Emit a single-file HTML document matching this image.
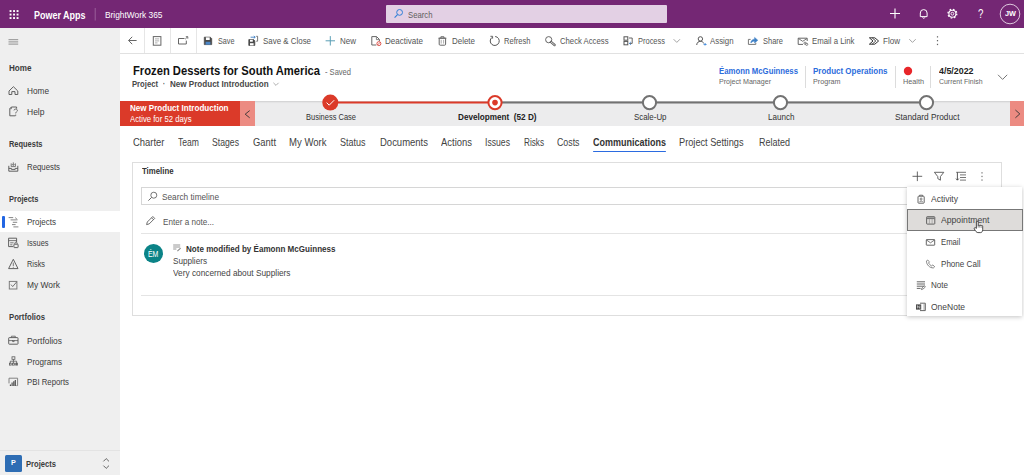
<!DOCTYPE html>
<html lang="en"><head><meta charset="utf-8"><title>Power Apps - BrightWork 365</title>
<style>
*{box-sizing:border-box;margin:0;padding:0}
html,body{width:1024px;height:475px;overflow:hidden;background:#fff;font-family:"Liberation Sans",sans-serif}
body{position:relative}
.abs,.t,svg.i{position:absolute}
.t{display:inline-block;transform-origin:0 50%;white-space:pre;line-height:20px;height:20px;font-family:"Liberation Sans",sans-serif;z-index:5}
#topbar{left:0;top:0;width:1024px;height:28.3px;background:#742774}
#search{left:386px;top:5px;width:281px;height:18.2px;background:#e3d0e4;border-radius:1px}
#side{left:0;top:28px;width:120px;height:447px;background:#efefef}
#sidesel{left:0;top:210.5px;width:120px;height:21.5px;background:#fff}
#sidebar-ind{left:2px;top:215.5px;width:2.5px;height:12px;background:#2266e3;border-radius:1px}
#sidefoot{left:0;top:450px;width:120px;height:25px;border-top:1px solid #e3e3e3;background:#efefef}
#ptile{left:5px;top:455px;width:16.5px;height:16.5px;background:#2e6db4;border-radius:1.5px}
#cmd{left:120px;top:28px;width:904px;height:25.5px;background:#fff;border-bottom:1px solid #e1e1e1}
.vd{top:28px;width:1px;height:25px;background:#e6e6e6}
.hd{top:66px;width:1px;height:22px;background:#dcdcdc}
#bpf{left:120px;top:100.8px;width:904px;height:25.2px;background:#ececed;box-shadow:inset 0 2px 2px -1px rgba(0,0,0,.13)}
#bpfname{left:120px;top:100.8px;width:120px;height:25.2px;background:#db3a29}
#bpfl{left:240px;top:100.8px;width:15px;height:25.2px;background:#ec8b82}
#bpfr{left:1009.7px;top:100.8px;width:14.3px;height:25.2px;background:#ec8b82}
#tabul{left:592.5px;top:150.7px;width:73px;height:1.7px;background:#2b6be0;border-radius:1px}
#card{left:132px;top:162px;width:870px;height:153.5px;border:1px solid #dedede;background:#fff}
#tsearch{left:140.5px;top:187px;width:853px;height:17.5px;border:1px solid #d6d6d6;background:#fff}
.hl{height:1px;background:#e4e4e4}
#avatar{left:144.1px;top:244px;width:19px;height:19px;border-radius:50%;background:#0b8387}
#menu{left:907px;top:187px;width:115px;height:129px;background:#fff;box-shadow:0 0.5px 4.5px rgba(0,0,0,.24);z-index:20}
#menusel{left:907px;top:209.4px;width:115.6px;height:21.8px;background:#dedcda;border:1px solid #777;z-index:21}
svg.i{z-index:25;overflow:visible}

</style></head>
<body>
<div id="topbar" class="abs"></div>
<div id="search" class="abs"></div>
<div id="side" class="abs"></div>
<div id="sidesel" class="abs"></div>
<div id="sidebar-ind" class="abs"></div>
<div id="sidefoot" class="abs"></div>
<div id="ptile" class="abs"></div>
<div id="cmd" class="abs"></div>
<div class="abs vd" style="left:144px"></div>
<div class="abs vd" style="left:170px"></div>
<div class="abs vd" style="left:196px"></div>
<div class="abs hd" style="left:805px"></div>
<div class="abs hd" style="left:895px"></div>
<div class="abs hd" style="left:930px"></div>
<div id="bpf" class="abs"></div>
<div id="bpfname" class="abs"></div>
<div id="bpfl" class="abs"></div>
<div id="bpfr" class="abs"></div>
<div id="tabul" class="abs"></div>
<div id="card" class="abs"></div>
<div id="tsearch" class="abs"></div>
<div class="abs hl" style="left:140.5px;top:233px;width:853px"></div>
<div class="abs hl" style="left:140.5px;top:295px;width:853px"></div>
<div id="avatar" class="abs"></div>
<div id="menu" class="abs"></div>
<div id="menusel" class="abs"></div>
<!-- BPF track -->
<svg class="i" style="left:0;top:0;z-index:6" width="1024" height="475" viewBox="0 0 1024 475">
  <line x1="330" y1="102.5" x2="495" y2="102.5" stroke="#db3a29" stroke-width="2"/>
  <line x1="495" y1="102.5" x2="926.5" y2="102.5" stroke="#727272" stroke-width="2"/>
  <circle cx="330.3" cy="102.6" r="8" fill="#db3a29"/>
  <path d="M326.6 102.6 L329.2 105.2 L334.2 100.2" fill="none" stroke="#fff" stroke-width="1"/>
  <circle cx="495" cy="102.6" r="6.6" fill="#fff" stroke="#db3a29" stroke-width="2"/>
  <circle cx="495" cy="102.6" r="2.8" fill="#db3a29"/>
  <circle cx="649.5" cy="102.6" r="6.6" fill="#fff" stroke="#727272" stroke-width="2"/>
  <circle cx="780.5" cy="102.6" r="6.6" fill="#fff" stroke="#727272" stroke-width="2"/>
  <circle cx="926.5" cy="102.6" r="6.6" fill="#fff" stroke="#727272" stroke-width="2"/>
  <path d="M249.7 110.6 L245.2 114.2 L249.7 117.8" fill="none" stroke="#333" stroke-width="0.9"/>
  <path d="M1015.4 110 L1019.8 113.9 L1015.4 117.8" fill="none" stroke="#333" stroke-width="0.9"/>
  <circle cx="908" cy="71" r="4.2" fill="#e8262a"/>
</svg>
<!-- top bar + command bar icons -->
<svg class="i" style="left:0;top:0" width="1024" height="56" viewBox="0 0 1024 56" fill="none" stroke-linecap="butt">
  <!-- waffle -->
  <g fill="#fff">
    <rect x="9.6" y="10.1" width="1.9" height="1.9"/><rect x="13.1" y="10.1" width="1.9" height="1.9"/><rect x="16.6" y="10.1" width="1.9" height="1.9"/>
    <rect x="9.6" y="13.6" width="1.9" height="1.9"/><rect x="13.1" y="13.6" width="1.9" height="1.9"/><rect x="16.6" y="13.6" width="1.9" height="1.9"/>
    <rect x="9.6" y="17.1" width="1.9" height="1.9"/><rect x="13.1" y="17.1" width="1.9" height="1.9"/><rect x="16.6" y="17.1" width="1.9" height="1.9"/>
  </g>
  <rect x="94.7" y="8" width="1" height="12.5" fill="#9a5f9a"/>
  <!-- search icon -->
  <circle cx="399.6" cy="12.4" r="2.9" stroke="#2f7fd8" stroke-width="1"/>
  <path d="M397.5 14.6 L394.6 17.6" stroke="#2f7fd8" stroke-width="1.1"/>
  <!-- plus -->
  <path d="M890 13.5 H900 M895 8.5 V18.5" stroke="#fff" stroke-width="1.1"/>
  <!-- bell -->
  <path d="M920.3 16.6 V13 A3.4 3.4 0 0 1 927.1 13 V16.6 Z" stroke="#fff" stroke-width="1"/>
  <path d="M922.6 17.4 A1.2 1.2 0 0 0 924.9 17.4" stroke="#fff" stroke-width="1"/>
  <!-- gear -->
  <g stroke="#fff">
    <circle cx="952.4" cy="13.7" r="3.5" stroke-width="1.1"/>
    <circle cx="952.4" cy="13.7" r="1.4" stroke-width="0.9"/>
    <circle cx="952.4" cy="13.7" r="4.4" stroke-width="1.3" stroke-dasharray="1.6 1.86"/>
  </g>
  <!-- avatar ring -->
  <circle cx="1010" cy="14" r="9.8" stroke="#e9d9e9" stroke-width="0.9"/>

  <!-- back arrow -->
  <path d="M128.6 40.5 H136.6 M132.2 36.8 L128.6 40.5 L132.2 44.2" stroke="#666" stroke-width="1"/>
  <!-- page icon -->
  <rect x="153.3" y="36.6" width="7.6" height="8.6" stroke="#666" stroke-width="1"/>
  <path d="M155 38.9 H159.2 M155 40.9 H159.2 M155 42.9 H157.5" stroke="#999" stroke-width="0.8"/>
  <!-- open in new window -->
  <path d="M184.5 38.5 H178.5 V44 H186.3 V40.6" stroke="#666" stroke-width="1"/>
  <path d="M185.2 39.2 L187.6 36.8 M185.8 36.7 H187.8 V38.7" stroke="#666" stroke-width="0.9"/>
  <!-- save -->
  <path d="M204.3 37.2 H210.3 L211.7 38.6 V44.6 H204.3 Z" fill="#4a4a4a" stroke="#4a4a4a" stroke-width="0.8"/>
  <rect x="205.9" y="37.4" width="3.8" height="2.6" fill="#fff"/>
  <rect x="205.6" y="41.8" width="4.8" height="2.9" fill="#4b86c6"/>
  <!-- save & close -->
  <path d="M248.8 39.6 H253.6 L254.8 40.8 V45.4 H248.8 Z" fill="#4a4a4a" stroke="#4a4a4a" stroke-width="0.8"/>
  <rect x="250" y="39.8" width="2.8" height="1.9" fill="#fff"/>
  <rect x="250" y="43.2" width="3.6" height="2.2" fill="#fff"/>
  <path d="M250.6 37.2 H255.2 M253.8 36 L255.2 37.2 L253.8 38.4" stroke="#3d7fc4" stroke-width="0.9"/>
  <path d="M256.2 36.3 H257.6 V41.2 H256.2" stroke="#555" stroke-width="0.8"/>
  <!-- new plus -->
  <path d="M325.6 40.8 H335 M330.3 36.1 V45.5" stroke="#5b9fb6" stroke-width="1"/>
  <!-- deactivate -->
  <path d="M376.3 45 H371.8 V36.6 H376.6 L379.4 39.4 V41" stroke="#666" stroke-width="1"/>
  <path d="M376.4 36.8 V39.6 H379.2" stroke="#666" stroke-width="0.8"/>
  <circle cx="378.9" cy="43.6" r="2" stroke="#d9453c" stroke-width="0.9" fill="#fff"/>
  <path d="M377.5 45 L380.3 42.2" stroke="#d9453c" stroke-width="0.8"/>
  <!-- delete -->
  <path d="M439.2 38.2 H445.6 V44.2 A1 1 0 0 1 444.6 45.2 H440.2 A1 1 0 0 1 439.2 44.2 Z" stroke="#666" stroke-width="1"/>
  <path d="M438.4 38.2 H446.4 M440.9 38 V36.7 H443.9 V38" stroke="#666" stroke-width="0.9"/>
  <path d="M441.2 39.8 V43.6 M443.6 39.8 V43.6" stroke="#999" stroke-width="0.8"/>
  <!-- refresh -->
  <path d="M492 37.4 A4.5 4.5 0 1 0 495.2 36.5" stroke="#555" stroke-width="1"/>
  <path d="M490.4 36.3 H492.6 V38.6" stroke="#555" stroke-width="0.9"/>
  <!-- check access key -->
  <circle cx="548.7" cy="39.7" r="3.1" stroke="#666" stroke-width="1"/>
  <path d="M550.9 41.9 L554.6 45" stroke="#666" stroke-width="2.4" stroke-linecap="round"/>
  <path d="M551.2 42.2 L554.4 44.8" stroke="#fff" stroke-width="0.7" stroke-linecap="round"/>
  <!-- process -->
  <rect x="624" y="36.8" width="3.8" height="3.4" stroke="#555" stroke-width="1"/>
  <rect x="624" y="41.4" width="3.8" height="3.4" stroke="#555" stroke-width="1"/>
  <path d="M629 38 H632.2 V43.4 H629.6" stroke="#555" stroke-width="0.9"/>
  <path d="M630.8 42 L629.4 43.4 L630.8 44.8" stroke="#2f7fd8" stroke-width="0.9"/>
  <!-- chevrons -->
  <path d="M673.6 39.2 L676.8 42.4 L680 39.2" stroke="#999" stroke-width="0.9"/>
  <path d="M909.3 39.2 L912.5 42.4 L915.7 39.2" stroke="#999" stroke-width="0.9"/>
  <!-- assign -->
  <circle cx="700.4" cy="38.9" r="2.2" stroke="#555" stroke-width="1"/>
  <path d="M696.7 45 C697 42.2 698.6 41.4 700.4 41.4 C702.2 41.4 703.4 42.2 703.8 43.4" stroke="#555" stroke-width="1"/>
  <path d="M703.6 44.4 H706 M705 43.3 L706.1 44.4 L705 45.5" stroke="#2f7fd8" stroke-width="0.9"/>
  <!-- share -->
  <path d="M750.6 39.4 H748.4 V44.4 H755.8 V42.8" stroke="#777" stroke-width="1"/>
  <path d="M750.8 43 C751 40.4 752.6 39.2 754.6 39.2 V37.4 L757.8 40.2 L754.6 43 V41.2 C753 41.2 751.8 41.8 750.8 43 Z" fill="#3d7fc4" stroke="#3d7fc4" stroke-width="0.5" stroke-linejoin="round"/>
  <!-- email a link -->
  <path d="M803 44.4 H798.2 V38.2 H807.2 V41" stroke="#666" stroke-width="1"/>
  <path d="M798.4 38.5 L802.7 41.3 L807 38.5" stroke="#666" stroke-width="0.9"/>
  <circle cx="805" cy="43.2" r="1.1" stroke="#666" stroke-width="0.8"/><circle cx="806.7" cy="44.3" r="1.1" stroke="#666" stroke-width="0.8"/>
  <!-- flow -->
  <path d="M869.4 37.8 H874.8 L878.6 41 L874.8 44.2 H869.4 L873 41 Z" stroke="#333" stroke-width="1" stroke-linejoin="round"/>
  <path d="M872.2 37.9 L875.8 41 L872.2 44.1" stroke="#333" stroke-width="0.9"/>
  <!-- more -->
  <g fill="#666"><rect x="936.9" y="36.2" width="1.2" height="1.3"/><rect x="936.9" y="40" width="1.2" height="1.3"/><rect x="936.9" y="43.8" width="1.2" height="1.3"/></g>
</svg>
<!-- sidebar icons -->
<svg class="i" style="left:0;top:28px" width="120" height="447" viewBox="0 28 120 447" fill="none" stroke="#5a5a5a" stroke-width="0.95">
  <!-- hamburger -->
  <path d="M8.5 39.7 H18.2 M8.5 41.9 H18.2 M8.5 44.1 H18.2" stroke="#777" stroke-width="0.8"/>
  <!-- home -->
  <path d="M9 91 L13.4 86.7 L17.8 91 V94.5 H15 V91.6 H11.8 V94.5 H9 Z" stroke-linejoin="round"/>
  <!-- help -->
  <path d="M15.4 115.8 H9.8 V108.6 L11.4 107 H16.6 V108.6" />
  <path d="M9.9 108.7 H11.5 V107.1" stroke-width="0.7"/>
  <path d="M14 110.4 C14 108.6 17.4 108.6 17.4 110.5 C17.4 111.8 15.7 111.8 15.7 113.4 M15.7 114.6 V115.8" stroke-width="0.9"/>
  <!-- requests -->
  <path d="M8.8 165.8 V171.2 H17.8 V165.8 M8.8 168.4 H11.4 V169.4 H15.2 V168.4 H17.8"/>
  <path d="M11.2 163.4 V166.6 H15.4 V163.4 M13.3 162.4 V165.4 M12.1 164.2 L13.3 165.4 L14.5 164.2" stroke-width="0.8"/>
  <!-- projects (gantt) -->
  <path d="M8.6 217.6 H13.2 M10.6 219.9 H16.8 M15.2 217.6 L17.6 219.9 M12.8 222.3 H17.2 M12 224.6 H15.6 M13.4 226.9 H18.4" stroke="#777" stroke-width="0.9"/>
  <!-- issues -->
  <path d="M13 246.6 H8.6 V238.2 H16.6 V242"/>
  <path d="M8.6 240.6 H16.6 M10.2 242.8 H13.6 M10.2 244.8 H12.4" stroke-width="0.8"/>
  <rect x="13.9" y="244.2" width="4.2" height="3.4" rx="0.5" fill="#efefef"/>
  <path d="M14.9 244.2 V243.2 A1.1 1.1 0 0 1 17.1 243.2 V244.2" stroke-width="0.8"/>
  <!-- risks -->
  <path d="M13.3 259.3 L18 268.6 H8.6 Z" stroke-linejoin="round"/>
  <path d="M13.3 262.6 V266 M13.3 266.8 V267.7" stroke-width="0.8"/>
  <!-- my work -->
  <rect x="9.3" y="281.4" width="7.6" height="7.6" stroke="#777"/>
  <path d="M11 284.6 L12.7 286.6 L16.6 282" stroke="#666" stroke-width="0.9"/>
  <!-- portfolios -->
  <rect x="8.7" y="337.6" width="9.3" height="6.6" rx="0.6"/>
  <path d="M11.4 337.6 V336.2 H15.3 V337.6 M8.7 340.6 H18 M12.6 340 V341.6 H14.1 V340" stroke-width="0.8"/>
  <!-- programs -->
  <rect x="12" y="356.8" width="2.9" height="2.5" stroke-width="0.8"/>
  <path d="M13.45 359.3 V361.2 M10.3 363.2 V361.2 H16.6 V363.2 M13.45 361.2 V363.2" stroke-width="0.8"/>
  <rect x="9.4" y="363.2" width="1.8" height="1.9" stroke-width="0.8"/><rect x="12.55" y="363.2" width="1.8" height="1.9" stroke-width="0.8"/><rect x="15.7" y="363.2" width="1.8" height="1.9" stroke-width="0.8"/>
  <!-- pbi reports -->
  <path d="M9 383.4 V378.2 H17.6 V385.6 H16.4" stroke="#777" stroke-width="0.9"/>
  <path d="M10.4 385.9 V384.4 M12.1 385.9 V382.6 M13.8 385.9 V381.2 M15.3 385.9 V380" stroke="#444" stroke-width="1.1"/>
  <!-- area switcher chevrons -->
  <path d="M103.4 461.4 L106.2 458.6 L109 461.4 M103.4 465.6 L106.2 468.4 L109 465.6" stroke="#555" stroke-width="0.9"/>
</svg>
<!-- main area icons -->
<svg class="i" style="left:120px;top:56px" width="904" height="280" viewBox="120 56 904 280" fill="none" stroke="#666" stroke-width="0.95">
  <!-- header chevrons -->
  <path d="M273.4 82.8 L276 85.4 L278.6 82.8" stroke="#999" stroke-width="0.8"/>
  <path d="M998 74.8 L1002.6 79.4 L1007.2 74.8" stroke="#666" stroke-width="0.9"/>
  <!-- timeline toolbar -->
  <path d="M912.5 176.3 H922.2 M917.35 171.5 V181.1" stroke="#555" stroke-width="0.9"/>
  <path d="M934.4 172.3 H943.8 L940.4 176.6 V180.2 L937.8 178.6 V176.6 Z" stroke="#555" stroke-width="0.9" stroke-linejoin="round"/>
  <path d="M957.4 172 V180 M956 178.6 L957.4 180.2 L958.8 178.6" stroke="#444" stroke-width="0.9"/>
  <path d="M956.2 172.3 H966 M960 174.9 H966 M960 177.5 H966 M960 180.1 H966" stroke="#666" stroke-width="0.9"/>
  <g fill="#777" stroke="none"><rect x="981.4" y="172.2" width="1.2" height="1.3"/><rect x="981.4" y="175.8" width="1.2" height="1.3"/><rect x="981.4" y="179.4" width="1.2" height="1.3"/></g>
  <!-- timeline search icon -->
  <circle cx="153.8" cy="195.2" r="3" stroke="#666" stroke-width="0.9"/>
  <path d="M151.6 197.4 L148.4 200.6" stroke="#666" stroke-width="1"/>
  <!-- pencil -->
  <path d="M146.6 224.6 L147.3 222 L152.8 216.5 L154.7 218.4 L149.2 223.9 Z M151.6 217.8 L153.4 219.6" stroke="#555" stroke-width="0.85" stroke-linejoin="round"/>
  <!-- note icon in record -->
  <path d="M173.2 245 H180.2 M173.2 247 H180.2 M173.2 249 H176.4" stroke="#8a8a8a" stroke-width="0.9"/>
  <path d="M177.4 251.2 L180.6 248.2" stroke="#8a8a8a" stroke-width="1.1"/>
</svg>
<svg class="i" style="left:900px;top:186px;z-index:31" width="124" height="136" viewBox="900 186 124 136" fill="none" stroke="#555" stroke-width="0.9">
  <!-- activity: clipboard -->
  <rect x="918" y="196.2" width="6.2" height="7" rx="0.7"/>
  <path d="M919.6 196.2 V195.2 H922.6 V196.2" stroke-width="0.8"/>
  <circle cx="921.1" cy="199" r="1" stroke-width="0.7"/><path d="M919.4 202.2 C919.6 200.6 922.6 200.6 922.8 202.2" stroke-width="0.7"/>
  <!-- appointment: calendar -->
  <rect x="926.6" y="216.7" width="8.2" height="7.4" rx="0.6"/>
  <path d="M926.6 218.3 H934.8" stroke-width="1.6" stroke="#777"/>
  <path d="M929.4 218.9 V224.1 M932.1 218.9 V224.1" stroke-width="0.7" stroke="#999"/>
  <!-- email -->
  <rect x="926.3" y="239.6" width="8.4" height="5.6" rx="0.4"/>
  <path d="M926.5 240 L930.5 242.8 L934.5 240" stroke-width="0.8"/>
  <!-- phone -->
  <path d="M927.6 260 L926.5 261.1 C926.3 264.6 929.8 268.1 933.4 267.9 L934.7 266.7 L932.8 265 L931.6 265.9 C930.4 265.4 929 264 928.6 262.9 L929.5 261.8 Z" stroke-width="0.8" stroke-linejoin="round" stroke="#666"/>
  <!-- note -->
  <path d="M916.8 281.8 H925 M916.8 284 H925 M916.8 286.2 H925 M916.8 288.4 H920.6" stroke="#555" stroke-width="0.9"/>
  <path d="M921.4 289.6 L922 287.8 L924.4 285.8 L925.4 287 L923 289 Z" stroke="#555" stroke-width="0.7" fill="#fff"/>
  <!-- onenote -->
  <path d="M920 303.2 H925.3 V310.6 H920" stroke="#555" stroke-width="0.9"/>
  <path d="M923.2 305 H925.3 M923.2 307 H925.3 M923.2 309 H925.3" stroke="#777" stroke-width="0.7"/>
  <rect x="916" y="304.4" width="5.2" height="5.2" fill="#444" stroke="none"/>
  <path d="M917.4 308.4 V305.6 L919.8 308.4 V305.6" stroke="#fff" stroke-width="0.6"/>
  <!-- hand cursor -->
  <path d="M976.4 228.4 V222.2 A0.9 0.9 0 0 1 978.2 222.2 V225.6 A0.8 0.8 0 0 1 979.7 225.7 A0.8 0.8 0 0 1 981.2 226 A0.8 0.8 0 0 1 982.7 226.6 V229.6 C982.7 231.4 981.8 232.6 980.6 232.6 H977.8 C976.6 232.6 975.6 231.2 974.4 229 C973.8 227.8 975 227 976.4 228.4 Z" fill="#fff" stroke="#222" stroke-width="0.8" stroke-linejoin="round"/>
  <path d="M978.2 225.6 V227.6 M979.7 225.8 V227.6 M981.2 226.2 V227.8" stroke="#222" stroke-width="0.5"/>
</svg>

<!-- text labels -->
<span id="t0" class="t" style="left:34.00px;top:5.00px;font-size:10.80px;font-weight:700;color:#fff;transform:scaleX(0.8306);">Power Apps</span>
<span id="t1" class="t" style="left:105.00px;top:5.00px;font-size:9.60px;font-weight:400;color:#fff;transform:scaleX(0.8718);">BrightWork 365</span>
<span id="t2" class="t" style="left:407.50px;top:4.50px;font-size:9.20px;font-weight:400;color:#605e5c;transform:scaleX(0.8412);">Search</span>
<span id="t3" class="t" style="left:1004.50px;top:4.30px;font-size:7.60px;font-weight:700;color:#fff;transform:scaleX(0.9657);">JW</span>
<span id="t4" class="t" style="left:978.30px;top:3.60px;font-size:12.50px;font-weight:400;color:#fff;transform:scaleX(0.7766);">?</span>
<span id="t5" class="t" style="left:9.00px;top:57.50px;font-size:9.10px;font-weight:700;color:#3b3b3b;transform:scaleX(0.8905);">Home</span>
<span id="t6" class="t" style="left:27.00px;top:80.50px;font-size:9.00px;font-weight:400;color:#3b3b3b;transform:scaleX(0.9161);">Home</span>
<span id="t7" class="t" style="left:27.00px;top:101.50px;font-size:9.00px;font-weight:400;color:#3b3b3b;transform:scaleX(0.9451);">Help</span>
<span id="t8" class="t" style="left:9.00px;top:134.00px;font-size:9.10px;font-weight:700;color:#3b3b3b;transform:scaleX(0.8183);">Requests</span>
<span id="t9" class="t" style="left:27.00px;top:157.00px;font-size:9.00px;font-weight:400;color:#3b3b3b;transform:scaleX(0.8677);">Requests</span>
<span id="t10" class="t" style="left:9.00px;top:189.00px;font-size:9.10px;font-weight:700;color:#3b3b3b;transform:scaleX(0.8219);">Projects</span>
<span id="t11" class="t" style="left:27.00px;top:212.00px;font-size:9.00px;font-weight:400;color:#3b3b3b;transform:scaleX(0.8919);">Projects</span>
<span id="t12" class="t" style="left:27.00px;top:233.00px;font-size:9.00px;font-weight:400;color:#3b3b3b;transform:scaleX(0.8264);">Issues</span>
<span id="t13" class="t" style="left:27.00px;top:254.00px;font-size:9.00px;font-weight:400;color:#3b3b3b;transform:scaleX(0.8182);">Risks</span>
<span id="t14" class="t" style="left:27.00px;top:275.00px;font-size:9.00px;font-weight:400;color:#3b3b3b;transform:scaleX(0.9337);">My Work</span>
<span id="t15" class="t" style="left:9.00px;top:307.10px;font-size:9.10px;font-weight:700;color:#3b3b3b;transform:scaleX(0.8483);">Portfolios</span>
<span id="t16" class="t" style="left:27.00px;top:330.50px;font-size:9.00px;font-weight:400;color:#3b3b3b;transform:scaleX(0.9326);">Portfolios</span>
<span id="t17" class="t" style="left:27.00px;top:351.50px;font-size:9.00px;font-weight:400;color:#3b3b3b;transform:scaleX(0.8971);">Programs</span>
<span id="t18" class="t" style="left:27.00px;top:372.00px;font-size:9.00px;font-weight:400;color:#3b3b3b;transform:scaleX(0.8654);">PBI Reports</span>
<span id="t19" class="t" style="left:10.80px;top:453.20px;font-size:7.20px;font-weight:700;color:#fff;transform:scaleX(1.0007);">P</span>
<span id="t20" class="t" style="left:26.00px;top:454.00px;font-size:9.10px;font-weight:700;color:#3b3b3b;transform:scaleX(0.8359);">Projects</span>
<span id="t21" class="t" style="left:217.50px;top:31.00px;font-size:9.00px;font-weight:400;color:#555;transform:scaleX(0.8043);">Save</span>
<span id="t22" class="t" style="left:262.50px;top:31.00px;font-size:9.00px;font-weight:400;color:#555;transform:scaleX(0.8802);">Save &amp; Close</span>
<span id="t23" class="t" style="left:339.50px;top:31.00px;font-size:9.00px;font-weight:400;color:#555;transform:scaleX(0.8881);">New</span>
<span id="t24" class="t" style="left:385.00px;top:31.00px;font-size:9.00px;font-weight:400;color:#555;transform:scaleX(0.8935);">Deactivate</span>
<span id="t25" class="t" style="left:452.00px;top:31.00px;font-size:9.00px;font-weight:400;color:#555;transform:scaleX(0.8841);">Delete</span>
<span id="t26" class="t" style="left:504.00px;top:31.00px;font-size:9.00px;font-weight:400;color:#555;transform:scaleX(0.8409);">Refresh</span>
<span id="t27" class="t" style="left:559.50px;top:31.00px;font-size:9.00px;font-weight:400;color:#555;transform:scaleX(0.8579);">Check Access</span>
<span id="t28" class="t" style="left:637.50px;top:31.00px;font-size:9.00px;font-weight:400;color:#555;transform:scaleX(0.8304);">Process</span>
<span id="t29" class="t" style="left:710.00px;top:31.00px;font-size:9.00px;font-weight:400;color:#555;transform:scaleX(0.8699);">Assign</span>
<span id="t30" class="t" style="left:762.50px;top:31.00px;font-size:9.00px;font-weight:400;color:#555;transform:scaleX(0.8322);">Share</span>
<span id="t31" class="t" style="left:811.50px;top:31.00px;font-size:9.00px;font-weight:400;color:#555;transform:scaleX(0.8668);">Email a Link</span>
<span id="t32" class="t" style="left:883.00px;top:31.00px;font-size:9.00px;font-weight:400;color:#555;transform:scaleX(0.8940);">Flow</span>
<span id="t33" class="t" style="left:132.50px;top:60.50px;font-size:13.40px;font-weight:700;color:#111;transform:scaleX(0.8367);">Frozen Desserts for South America</span>
<span id="t34" class="t" style="left:324.50px;top:61.50px;font-size:9.20px;font-weight:400;color:#666;transform:scaleX(0.8209);">- Saved</span>
<span id="t35" class="t" style="left:132.40px;top:74.00px;font-size:9.40px;font-weight:700;color:#484848;transform:scaleX(0.8177);">Project</span>
<span id="t36" class="t" style="left:163.20px;top:74.00px;font-size:9.40px;font-weight:700;color:#484848;transform:scaleX(0.6400);">·</span>
<span id="t37" class="t" style="left:170.40px;top:74.00px;font-size:9.40px;font-weight:700;color:#484848;transform:scaleX(0.8604);">New Product Introduction</span>
<span id="t38" class="t" style="left:718.50px;top:61.00px;font-size:9.40px;font-weight:700;color:#2c6cdc;transform:scaleX(0.8286);">Éamonn McGuinness</span>
<span id="t39" class="t" style="left:718.50px;top:72.40px;font-size:8.00px;font-weight:400;color:#666;transform:scaleX(0.8858);">Project Manager</span>
<span id="t40" class="t" style="left:813.00px;top:61.00px;font-size:9.40px;font-weight:700;color:#2c6cdc;transform:scaleX(0.8513);">Product Operations</span>
<span id="t41" class="t" style="left:813.00px;top:72.40px;font-size:8.00px;font-weight:400;color:#666;transform:scaleX(0.8961);">Program</span>
<span id="t42" class="t" style="left:902.50px;top:72.40px;font-size:8.00px;font-weight:400;color:#666;transform:scaleX(0.9081);">Health</span>
<span id="t43" class="t" style="left:938.50px;top:61.00px;font-size:9.40px;font-weight:700;color:#222;transform:scaleX(0.9452);">4/5/2022</span>
<span id="t44" class="t" style="left:938.50px;top:72.40px;font-size:8.00px;font-weight:400;color:#666;transform:scaleX(0.8657);">Current Finish</span>
<span id="t45" class="t" style="left:129.50px;top:97.50px;font-size:9.40px;font-weight:700;color:#fff;transform:scaleX(0.8596);">New Product Introduction</span>
<span id="t46" class="t" style="left:129.50px;top:108.50px;font-size:9.20px;font-weight:400;color:#fff;transform:scaleX(0.8421);">Active for 52 days</span>
<span id="t47" class="t" style="left:305.50px;top:107.00px;font-size:9.40px;font-weight:400;color:#333;transform:scaleX(0.7996);">Business Case</span>
<span id="t48" class="t" style="left:457.50px;top:107.00px;font-size:9.40px;font-weight:700;color:#222;transform:scaleX(0.8710);">Development&nbsp; (52 D)</span>
<span id="t49" class="t" style="left:634.00px;top:107.00px;font-size:9.40px;font-weight:400;color:#333;transform:scaleX(0.8428);">Scale-Up</span>
<span id="t50" class="t" style="left:767.50px;top:107.00px;font-size:9.40px;font-weight:400;color:#333;transform:scaleX(0.8614);">Launch</span>
<span id="t51" class="t" style="left:894.50px;top:107.00px;font-size:9.40px;font-weight:400;color:#333;transform:scaleX(0.8839);">Standard Product</span>
<span id="t52" class="t" style="left:132.50px;top:132.30px;font-size:11.20px;font-weight:400;color:#424242;transform:scaleX(0.8442);">Charter</span>
<span id="t53" class="t" style="left:178.00px;top:132.30px;font-size:11.20px;font-weight:400;color:#424242;transform:scaleX(0.7676);">Team</span>
<span id="t54" class="t" style="left:212.00px;top:132.30px;font-size:11.20px;font-weight:400;color:#424242;transform:scaleX(0.7749);">Stages</span>
<span id="t55" class="t" style="left:252.50px;top:132.30px;font-size:11.20px;font-weight:400;color:#424242;transform:scaleX(0.8402);">Gantt</span>
<span id="t56" class="t" style="left:289.00px;top:132.30px;font-size:11.20px;font-weight:400;color:#424242;transform:scaleX(0.8538);">My Work</span>
<span id="t57" class="t" style="left:340.00px;top:132.30px;font-size:11.20px;font-weight:400;color:#424242;transform:scaleX(0.8039);">Status</span>
<span id="t58" class="t" style="left:379.50px;top:132.30px;font-size:11.20px;font-weight:400;color:#424242;transform:scaleX(0.8482);">Documents</span>
<span id="t59" class="t" style="left:441.00px;top:132.30px;font-size:11.20px;font-weight:400;color:#424242;transform:scaleX(0.8450);">Actions</span>
<span id="t60" class="t" style="left:485.00px;top:132.30px;font-size:11.20px;font-weight:400;color:#424242;transform:scaleX(0.7729);">Issues</span>
<span id="t61" class="t" style="left:523.50px;top:132.30px;font-size:11.20px;font-weight:400;color:#424242;transform:scaleX(0.7310);">Risks</span>
<span id="t62" class="t" style="left:557.00px;top:132.30px;font-size:11.20px;font-weight:400;color:#424242;transform:scaleX(0.7865);">Costs</span>
<span id="t63" class="t" style="left:592.50px;top:132.30px;font-size:11.20px;font-weight:700;color:#333;transform:scaleX(0.8043);">Communications</span>
<span id="t64" class="t" style="left:679.00px;top:132.30px;font-size:11.20px;font-weight:400;color:#424242;transform:scaleX(0.8231);">Project Settings</span>
<span id="t65" class="t" style="left:758.50px;top:132.30px;font-size:11.20px;font-weight:400;color:#424242;transform:scaleX(0.8039);">Related</span>
<span id="t66" class="t" style="left:141.50px;top:161.00px;font-size:9.40px;font-weight:700;color:#333;transform:scaleX(0.8317);">Timeline</span>
<span id="t67" class="t" style="left:162.00px;top:186.50px;font-size:9.40px;font-weight:400;color:#555;transform:scaleX(0.8820);">Search timeline</span>
<span id="t68" class="t" style="left:162.50px;top:212.00px;font-size:9.40px;font-weight:400;color:#555;transform:scaleX(0.8658);">Enter a note...</span>
<span id="t69" class="t" style="left:185.50px;top:238.50px;font-size:9.40px;font-weight:700;color:#333;transform:scaleX(0.8593);">Note modified by Éamonn McGuinness</span>
<span id="t70" class="t" style="left:172.50px;top:251.00px;font-size:9.40px;font-weight:400;color:#444;transform:scaleX(0.8697);">Suppliers</span>
<span id="t71" class="t" style="left:172.50px;top:262.50px;font-size:9.40px;font-weight:400;color:#444;transform:scaleX(0.8841);">Very concerned about Suppliers</span>
<span id="t72" class="t" style="left:148.30px;top:243.90px;font-size:8.40px;font-weight:400;color:#fff;transform:scaleX(0.8279);">ÉM</span>
<span id="t73" class="t" style="left:931.00px;top:189.00px;font-size:9.40px;font-weight:400;color:#444;transform:scaleX(0.9090);z-index:30;">Activity</span>
<span id="t74" class="t" style="left:941.00px;top:210.00px;font-size:9.40px;font-weight:400;color:#444;transform:scaleX(0.9213);z-index:30;">Appointment</span>
<span id="t75" class="t" style="left:941.00px;top:232.00px;font-size:9.40px;font-weight:400;color:#444;transform:scaleX(0.8229);z-index:30;">Email</span>
<span id="t76" class="t" style="left:941.00px;top:253.70px;font-size:9.40px;font-weight:400;color:#444;transform:scaleX(0.8610);z-index:30;">Phone Call</span>
<span id="t77" class="t" style="left:931.00px;top:275.00px;font-size:9.40px;font-weight:400;color:#444;transform:scaleX(0.8580);z-index:30;">Note</span>
<span id="t78" class="t" style="left:931.00px;top:297.00px;font-size:9.40px;font-weight:400;color:#444;transform:scaleX(0.9059);z-index:30;">OneNote</span>
</body></html>
